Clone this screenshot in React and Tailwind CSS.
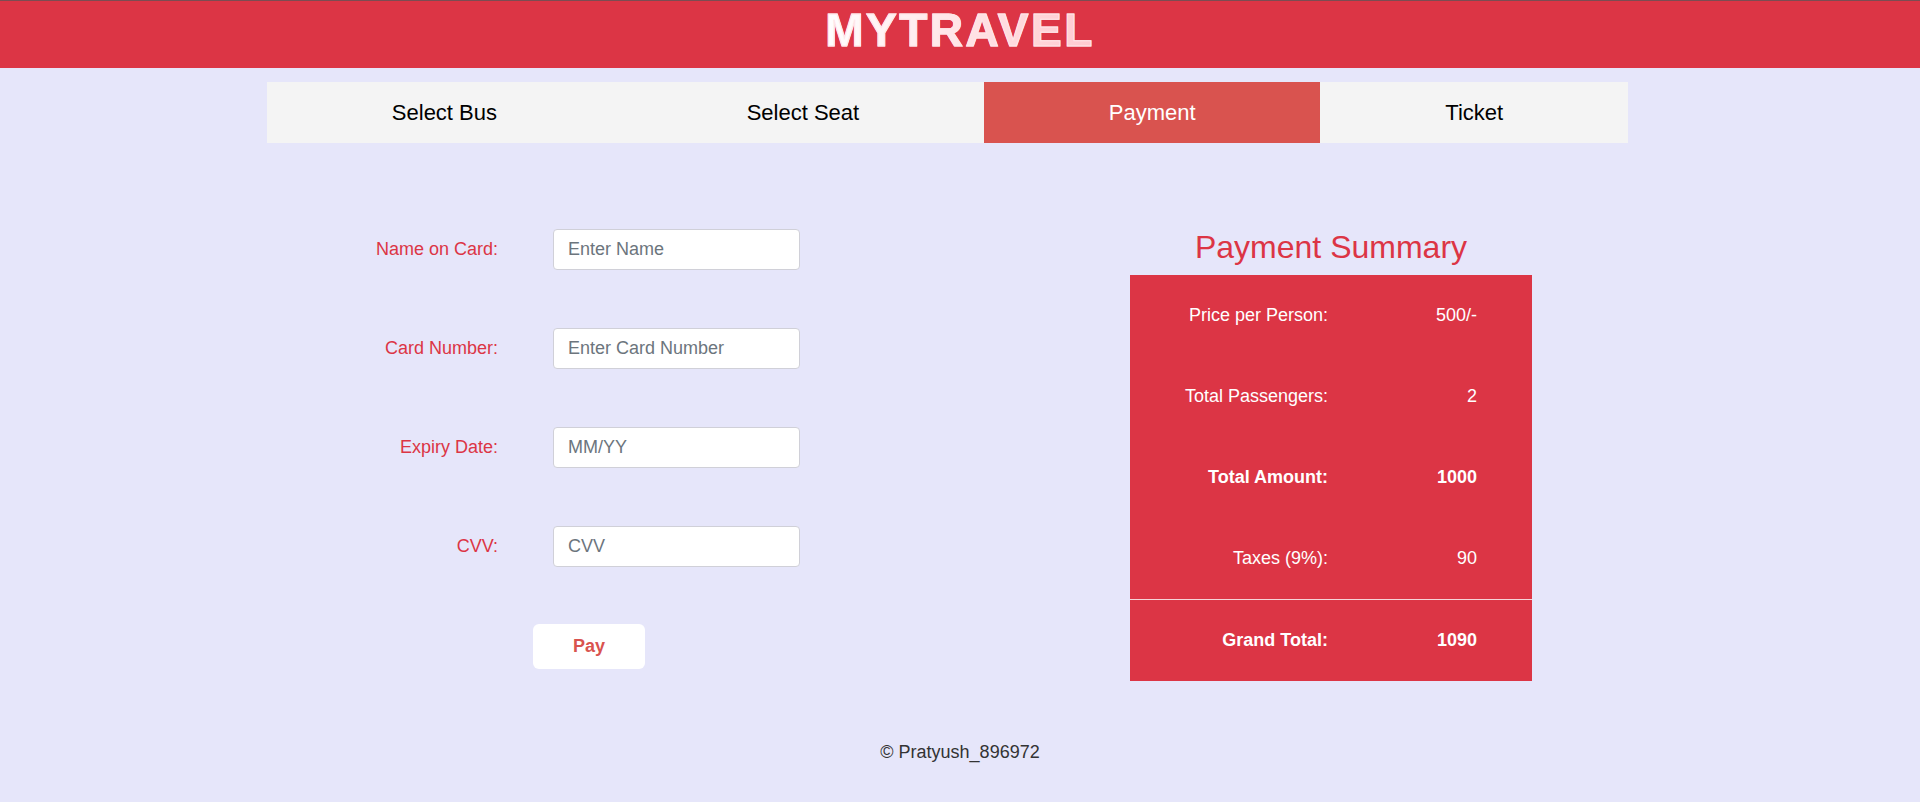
import React from 'react';

const tabs = [
  { label: 'Select Bus', active: false },
  { label: 'Select Seat', active: false },
  { label: 'Payment', active: true },
  { label: 'Ticket', active: false },
];

const fields = [
  { label: 'Name on Card:', placeholder: 'Enter Name' },
  { label: 'Card Number:', placeholder: 'Enter Card Number' },
  { label: 'Expiry Date:', placeholder: 'MM/YY' },
  { label: 'CVV:', placeholder: 'CVV' },
];

const summary = [
  { label: 'Price per Person:', value: '500/-' },
  { label: 'Total Passengers:', value: '2' },
  { label: 'Total Amount:', value: '1000', bold: true },
  { label: 'Taxes (9%):', value: '90' },
];

export default function App() {
  return (
    <div className="min-h-screen bg-[#e6e6fa] font-['Liberation_Sans',Arial,sans-serif]">
      {/* Header */}
      <header className="h-[68px] bg-[#dc3545] border-t border-[#7b4c52] flex justify-center">
        <h1 className="mt-[3px] text-[46px] leading-[52px] font-bold tracking-[2.5px] bg-gradient-to-r from-white to-[#ffc9cf] bg-clip-text text-transparent [-webkit-text-stroke:1px_#ffe6e9]">
          MYTRAVEL
        </h1>
      </header>

      {/* Steps */}
      <nav className="mt-[14px] ml-[267px] w-[1361px] h-[61px] flex">
        {tabs.map((tab) => (
          <div
            key={tab.label}
            className={
              tab.active
                ? 'flex-auto flex items-center justify-center bg-[#d9534f] text-white text-[22px]'
                : 'flex-auto flex items-center justify-center bg-[#f4f4f4] text-black text-[22px]'
            }
          >
            {tab.label}
          </div>
        ))}
      </nav>

      {/* Payment form + summary */}
      <main className="mt-[81px] pl-[267px] flex items-start">
        <form className="w-[533px] pt-[5px] flex flex-col" onSubmit={(e) => e.preventDefault()}>
          <div className="flex flex-col gap-[58px]">
            {fields.map((f) => (
              <div key={f.label} className="flex items-center h-[41px]">
                <label className="w-[231px] text-right text-[18px] text-[#dc3545]">
                  {f.label}
                </label>
                <input
                  type="text"
                  placeholder={f.placeholder}
                  className="ml-[55px] w-[247px] h-[41px] px-[14px] bg-white border border-[#d0d0d8] rounded-[4px] text-[18px] placeholder:text-[#6c757d] outline-none"
                />
              </div>
            ))}
          </div>
          <button
            type="submit"
            className="mt-[57px] ml-[266px] w-[112px] h-[45px] bg-white rounded-[6px] text-[#d9534f] font-bold text-[18px]"
          >
            Pay
          </button>
        </form>

        <section className="ml-[330px] w-[402px] pt-[3px]">
          <h2 className="text-center text-[32px] leading-[40px] text-[#dc3545]">
            Payment Summary
          </h2>
          <div className="mt-[8px] bg-[#dc3545] text-white text-[18px]">
            {summary.map((row) => (
              <div
                key={row.label}
                className={row.bold ? 'h-[81px] flex items-center font-bold' : 'h-[81px] flex items-center'}
              >
                <span className="w-[198px] text-right">{row.label}</span>
                <span className="w-[149px] text-right">{row.value}</span>
              </div>
            ))}
            <div className="h-[82px] flex items-center font-bold border-t border-[#f6d3d7]">
              <span className="w-[198px] text-right">Grand Total:</span>
              <span className="w-[149px] text-right">1090</span>
            </div>
          </div>
        </section>
      </main>

      <footer className="mt-[58px] text-center text-[18px] text-[#333]">
        © Pratyush_896972
      </footer>
    </div>
  );
}
